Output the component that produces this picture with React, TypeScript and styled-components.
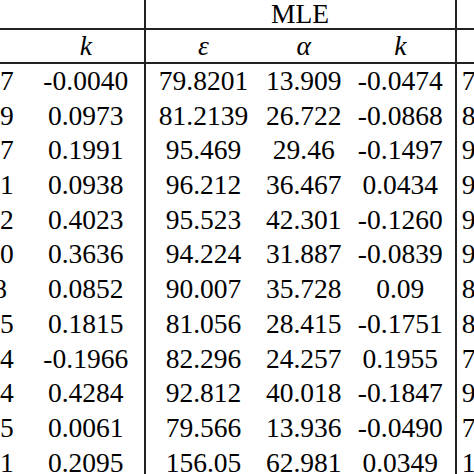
import React from "react";
import styled, { createGlobalStyle } from "styled-components";

const Global = createGlobalStyle`
  html, body {
    margin: 0;
    padding: 0;
    background: #ffffff;
    overflow: hidden;
  }
`;

const Viewport = styled.div`
  width: 474px;
  height: 474px;
  overflow: hidden;
  background: #ffffff;
`;

const Grid = styled.div`
  display: grid;
  grid-template-columns: 104px 115.5px 118px 84.5px 108.5px 102px;
  grid-template-rows: 30px 34px repeat(12, 34.7px);
  margin-left: -76px;
  width: max-content;
  font-family: "Liberation Serif", "Times New Roman", serif;
  font-size: 27.5px;
  color: #000000;
`;

const Cell = styled.div<{
  $div?: boolean;
  $rule?: boolean;
  $lh: number;
  $italic?: boolean;
  $span?: number;
}>`
  box-sizing: border-box;
  border-left: ${(p) => (p.$div ? "2px solid #222222" : "none")};
  border-bottom: ${(p) => (p.$rule ? "2px solid #222222" : "none")};
  line-height: ${(p) => p.$lh}px;
  font-style: ${(p) => (p.$italic ? "italic" : "normal")};
  grid-column: span ${(p) => p.$span ?? 1};
  text-align: center;
  white-space: nowrap;
`;

const colA = ["13.907", "26.749", "29.467", "36.461", "42.312", "31.840", "35.78", "28.425", "24.264", "40.024", "13.945", "62.991"];
const kL = ["-0.0040", "0.0973", "0.1991", "0.0938", "0.4023", "0.3636", "0.0852", "0.1815", "-0.1966", "0.4284", "0.0061", "0.2095"];
const eps = ["79.8201", "81.2139", "95.469", "96.212", "95.523", "94.224", "90.007", "81.056", "82.296", "92.812", "79.566", "156.05"];
const alpha = ["13.909", "26.722", "29.46", "36.467", "42.301", "31.887", "35.728", "28.415", "24.257", "40.018", "13.936", "62.981"];
const kM = ["-0.0474", "-0.0868", "-0.1497", "0.0434", "-0.1260", "-0.0839", "0.09", "-0.1751", "0.1955", "-0.1847", "-0.0490", "0.0349"];
const colR = ["79.8164", "81.2093", "95.4717", "96.2159", "95.5190", "94.2265", "89.9968", "81.0610", "72.2918", "92.8147", "79.5684", "156.048"];

const ROW = 34.7;

export default function App() {
  return (
    <Viewport>
      <Global />
      <Grid>
        <Cell $lh={28} $rule />
        <Cell $lh={28} $rule />
        <Cell $lh={28} $rule $div $span={3}>MLE</Cell>
        <Cell $lh={28} $rule $div />

        <Cell $lh={32} $rule $italic>α</Cell>
        <Cell $lh={32} $rule $italic>k</Cell>
        <Cell $lh={32} $rule $div $italic>ε</Cell>
        <Cell $lh={32} $rule $italic>α</Cell>
        <Cell $lh={32} $rule $italic>k</Cell>
        <Cell $lh={32} $rule $div $italic>ε</Cell>

        {kL.map((_, i) => (
          <React.Fragment key={i}>
            <Cell $lh={ROW}>{colA[i]}</Cell>
            <Cell $lh={ROW}>{kL[i]}</Cell>
            <Cell $lh={ROW} $div>{eps[i]}</Cell>
            <Cell $lh={ROW}>{alpha[i]}</Cell>
            <Cell $lh={ROW}>{kM[i]}</Cell>
            <Cell $lh={ROW} $div>{colR[i]}</Cell>
          </React.Fragment>
        ))}
      </Grid>
    </Viewport>
  );
}
